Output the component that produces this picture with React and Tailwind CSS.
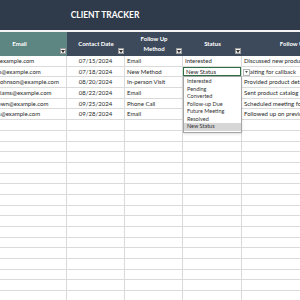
const columns = "grid grid-cols-[95px_58px_58px_59px_120px]";

const rows = [
  { email: "jo.smith@example.com", date: "07/15/2024", method: "Email", status: "Interested", notes: "Discussed new product options" },
  { email: "pat.nelson@example.com", date: "07/18/2024", method: "New Method", status: "New Status", notes: "Waiting for callback", editing: true },
  { email: "matthew.johnson@example.com", date: "08/20/2024", method: "In-person Visit", status: "", notes: "Provided product details" },
  { email: "daniel.williams@example.com", date: "08/22/2024", method: "Email", status: "", notes: "Sent product catalog" },
  { email: "jenifer.brown@example.com", date: "09/25/2024", method: "Phone Call", status: "", notes: "Scheduled meeting for next week" },
  { email: "tom.harris@example.com", date: "09/28/2024", method: "Email", status: "", notes: "Followed up on previous call" },
];

const statusOptions = ["Interested", "Pending", "Converted", "Follow-up Due", "Future Meeting", "Resolved", "New Status"];

const FilterButton = () => (
  <span className="absolute right-[1px] bottom-[2px] flex h-[6px] w-[6px] items-center justify-center border border-[#9a9a9a] bg-[#f3f3f3]">
    <svg width="4" height="3" viewBox="0 0 4 3">
      <path d="M0 0h4L2 3z" fill="#333" />
    </svg>
  </span>
);

const HeaderCell = ({ children, teal }) => (
  <div
    className={`relative flex items-center justify-center text-center leading-[10.5px] font-bold text-white ${
      teal ? "bg-[#5d8582]" : "bg-[#3d4a5b]"
    }`}
  >
    {children}
    <FilterButton />
  </div>
);

const StatusDropdown = () => (
  <div className="absolute left-0 top-full z-10 flex w-[59px] flex-col border border-[#a6a6a6] bg-white py-[1px] shadow-sm">
    {statusOptions.map((option, i) => (
      <div
        key={option}
        className={`h-[7.5px] pl-[3px] text-[5.5px] leading-[7.5px] text-[#333] ${
          i === statusOptions.length - 1 ? "bg-[#d6d6d6]" : ""
        }`}
      >
        {option}
      </div>
    ))}
  </div>
);

const DataRow = ({ item }) => {
  const cell = "h-[10.7px] overflow-hidden whitespace-nowrap border-b border-r border-[#dadada] leading-[10px]";

  return (
    <div className={columns}>
      <div className={`${cell} pl-[2px]`}>{item?.email}</div>
      <div className={`${cell} text-center`}>{item?.date}</div>
      <div className={`${cell} pl-[2px]`}>{item?.method}</div>
      {item?.editing ? (
        <div className="relative h-[10.7px] border-b border-r border-[#dadada]">
          <div className="h-full border border-[#2f6f45] pl-[2px] leading-[8px]">{item.status}</div>
          <StatusDropdown />
        </div>
      ) : (
        <div className={`${cell} pl-[2px]`}>{item?.status}</div>
      )}
      <div className={`${cell} relative pl-[2px]`}>
        {item?.notes}
        {item?.editing && (
          <span className="absolute left-[1px] top-[2px] flex h-[7px] w-[7px] items-center justify-center border border-[#b5b5b5] bg-white">
            <svg width="3" height="2" viewBox="0 0 4 3">
              <path d="M0 0h4L2 3z" fill="#444" />
            </svg>
          </span>
        )}
      </div>
    </div>
  );
};

const App = () => {
  const blanks = Array.from({ length: 17 });

  return (
    <div className="h-[300px] w-[300px] overflow-hidden bg-white font-['Lato',sans-serif] text-[6px] text-[#1f1f1f]">
      <div className="flex h-[30px] items-center bg-[#2f3b4b]">
        <span className="w-[210px] text-center text-[8.5px] font-bold text-white">CLIENT TRACKER</span>
      </div>
      <div className="h-[2px] bg-[#f4f4f4]" />
      <div className="ml-[-28px] w-[390px]">
        <div className={`${columns} h-[24px] text-[6px]`}>
          <HeaderCell teal>Email</HeaderCell>
          <HeaderCell>Contact Date</HeaderCell>
          <HeaderCell>
            Follow Up
            <br />
            Method
          </HeaderCell>
          <HeaderCell>Status</HeaderCell>
          <HeaderCell>Follow Up Notes</HeaderCell>
        </div>
        {rows.map((item) => (
          <DataRow key={item.email} item={item} />
        ))}
        {blanks.map((_, i) => (
          <DataRow key={i} />
        ))}
      </div>
    </div>
  );
};

export default App;
